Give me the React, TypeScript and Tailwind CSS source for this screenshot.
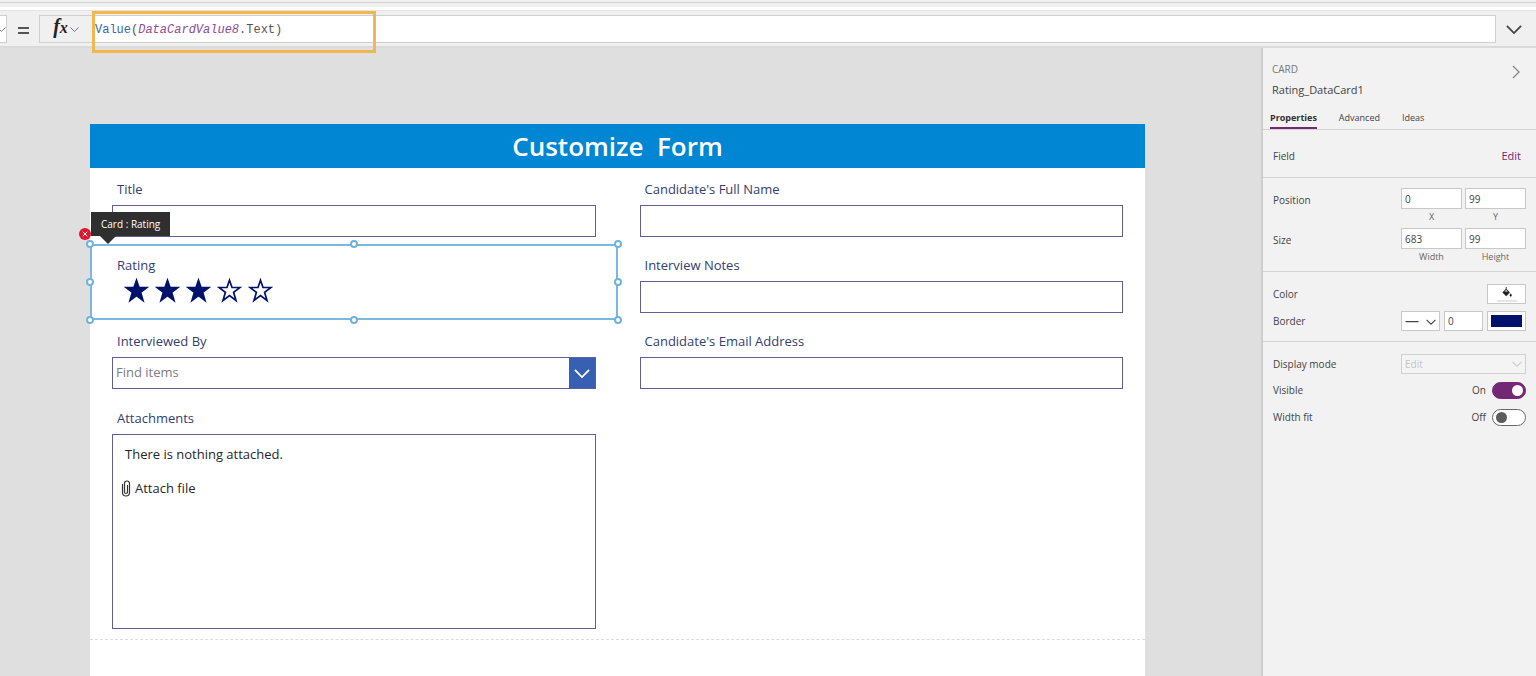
import { useState } from "react";
import { clsx } from "clsx";

const Chevron = ({ className }: { className?: string }) => (
  <svg viewBox="0 0 18 10" fill="none" stroke="currentColor" strokeWidth="2" className={className} aria-hidden="true">
    <path d="M1 1l8 8 8-8" />
  </svg>
);

const Star = ({ filled }: { filled: boolean }) => (
  <svg viewBox="0 0 25 25" className="block h-[25px] w-[25px]" fill={filled ? "#00126b" : "none"} stroke="#00126b" strokeWidth="1.7" aria-hidden="true">
    <path d="M12.5 2.2L15 9.5h8L16.6 14.3l2.4 8.1-6.500-4.900L6 22.400l2.400-8.100L2 9.500h8z" />
  </svg>
);

const TextField = ({ id, label }: { id: string; label: string }) => (
  <div className="h-[76px] px-[22px] pt-[9px]">
    <label htmlFor={id} className="mb-1 block pl-[5px] leading-6">{label}</label>
    <input id={id} type="text" className="block h-8 w-full border border-[#5d5f95] bg-white px-1 outline-none" />
  </div>
);

const NumberBox = ({ id, label, value }: { id: string; label: string; value: string }) => (
  <div className="w-[61px]">
    <input id={id} type="text" defaultValue={value} className="block h-[21px] w-full border border-[#c8c8c8] bg-white px-[3px] outline-none" />
    <label htmlFor={id} className="block text-center text-[9px] leading-4 text-[#666]">{label}</label>
  </div>
);

const Toggle = ({ id, label, on, onChange }: { id: string; label: string; on: boolean; onChange: (v: boolean) => void }) => (
  <div className="flex h-[17px] items-center justify-between">
    <label htmlFor={id}>{label}</label>
    <div className="flex items-center gap-[6px]">
      <span>{on ? "On" : "Off"}</span>
      <span className="relative block h-[17px] w-[34px]">
        <input
          id={id}
          type="checkbox"
          role="switch"
          checked={on}
          onChange={(e) => onChange(e.target.checked)}
          className="block h-full w-full appearance-none rounded-full border border-[#666] bg-white checked:border-[#742774] checked:bg-[#742774]"
        />
        <span className={clsx("pointer-events-none absolute top-[3px] h-[11px] w-[11px] rounded-full", on ? "right-[3px] bg-white" : "left-[4px] bg-[#5c5c5c]")} />
      </span>
    </div>
  </div>
);

const handles = [
  "-left-1 -top-1",
  "left-1/2 -ml-1 -top-1",
  "-right-1 -top-1",
  "-left-1 top-1/2 -mt-1",
  "-right-1 top-1/2 -mt-1",
  "-left-1 -bottom-1",
  "left-1/2 -ml-1 -bottom-1",
  "-right-1 -bottom-1",
];

const RatingCard = () => {
  const [rating, setRating] = useState(3);
  return (
    <fieldset className="relative h-[76px] px-[22px] pt-[9px]">
      <div className="pl-[5px] leading-6" id="rating-label">Rating</div>
      <div role="radiogroup" aria-labelledby="rating-label" className="mt-px flex gap-[6px] pl-3">
        {[1, 2, 3, 4, 5].map((n) => (
          <label key={n} className="relative block">
            <input type="radio" name="rating" aria-label={`${n}`} checked={rating === n} onChange={() => setRating(n)} className="absolute inset-0 appearance-none" />
            <Star filled={n <= rating} />
          </label>
        ))}
      </div>
      <div className="pointer-events-none absolute inset-0 border-2 border-[#7ab8df]" />
      {handles.map((place) => (
        <span key={place} className={clsx("absolute h-2 w-2 rounded-full border-2 border-[#6fb3dc] bg-white", place)} />
      ))}
      <div className="absolute -top-8 left-px h-6 bg-[#2f2f2f] px-[10px] text-[10px] leading-6 text-white">
        Card : Rating
        <svg viewBox="0 0 16 8" className="absolute left-[9px] top-6 h-2 w-4" fill="#2f2f2f" aria-hidden="true">
          <path d="M0 0h16L8 8z" />
        </svg>
      </div>
      <button type="button" aria-label="Show error" className="absolute -left-[11px] -top-4 flex h-3 w-3 items-center justify-center rounded-full bg-[#e0142a]">
        <svg viewBox="0 0 8 8" className="h-[6px] w-[6px]" stroke="#fff" strokeWidth="1.3" aria-hidden="true">
          <path d="M1 1l6 6M7 1L1 7" />
        </svg>
      </button>
    </fieldset>
  );
};

const FormulaBar = () => {
  const [formula, setFormula] = useState("Value(DataCardValue8.Text)");
  const parts = formula.split(/(Value(?=\()|DataCardValue8)/);
  return (
    <header className="bg-[#f0f0f0]">
      <div className="h-[3px] border-b border-[#d2d2d2]" />
      <div className="h-[7px] border-b-[3px] border-white" />
      <div className="flex h-[38px] border-b-2 border-[#dadada] border-t border-t-[#e4e4e4] pt-1">
        <button aria-label="Property" className="flex h-7 w-[7px] items-center justify-end overflow-hidden border border-l-0 border-[#cfcfcf] bg-white text-[#777]">
          <Chevron className="h-[5px] w-[9px] shrink-0" />
        </button>
        <span className="flex w-8 items-center justify-center" aria-hidden="true">
          <svg viewBox="0 0 11 9" className="h-[9px] w-[11px]" fill="#555"><path d="M0 1h11v2H0zM0 6h11v2H0z" /></svg>
        </span>
        <div className="relative flex h-7 min-w-0 flex-1 border border-[#cfcfcf]">
          <button className="flex w-[52px] items-center justify-center gap-[2px] text-[#222]" aria-label="Functions">
            <span className="pb-1 font-['Liberation_Serif'] text-xl leading-6 font-bold italic">f<span className="text-base">x</span></span>
            <Chevron className="h-[5px] w-[9px] text-[#777]" />
          </button>
          <div className="relative flex-1 bg-white font-['Liberation_Mono'] text-xs leading-7">
            <input
              aria-label="Formula"
              spellCheck={false}
              value={formula}
              onChange={(e) => setFormula(e.target.value)}
              className="block h-[26px] w-full px-[3px] text-transparent caret-[#444] outline-none"
            />
            <div aria-hidden="true" className="pointer-events-none absolute inset-0 whitespace-pre px-[3px] text-[#555]">
              {parts.map((p, i) => (
                <span key={i} className={clsx(p === "Value" && "text-[#3568a8]", p === "DataCardValue8" && "text-[#8c4a94] italic")}>{p}</span>
              ))}
            </div>
          </div>
          <div className="pointer-events-none absolute -top-[5px] left-[52px] h-[42px] w-[284px] border-[3px] border-[#f2b84f]" />
        </div>
        <button aria-label="Expand formula bar" className="flex h-7 w-10 items-center justify-center pr-1 text-[#444]">
          <Chevron className="h-[9px] w-4" />
        </button>
      </div>
    </header>
  );
};

const PropertiesPanel = () => {
  const [visible, setVisible] = useState(true);
  const [widthFit, setWidthFit] = useState(false);
  const [tab, setTab] = useState("Properties");
  return (
    <aside className="w-[275px] shrink-0 border-l-2 border-[#cdcdcd] bg-[#f2f2f2] text-[10px] text-[#444]">
      <div className="relative pt-3">
        <div className="px-[9px] leading-[18px] text-[#777]">CARD</div>
        <div className="px-[9px] text-[11px] leading-6">Rating_DataCard1</div>
        <button aria-label="Collapse panel" className="absolute right-3 top-4 flex h-4 w-4 items-center justify-center text-[#888]">
          <svg viewBox="0 0 8 14" className="h-[14px] w-2" fill="none" stroke="currentColor" strokeWidth="1.3" aria-hidden="true"><path d="M1 1l6 6-6 6" /></svg>
        </button>
        <div role="tablist" className="mt-2 flex gap-[22px] border-b border-[#d4d4d4] px-[7px] text-[9px] leading-4">
          {["Properties", "Advanced", "Ideas"].map((t) => (
            <button
              key={t}
              role="tab"
              aria-selected={tab === t}
              onClick={() => setTab(t)}
              className={clsx("border-b-2 pb-px", tab === t ? "border-[#742774] font-bold text-[#333]" : "border-transparent")}
            >
              {t}
            </button>
          ))}
        </div>
      </div>

      <section className="flex h-12 items-center justify-between border-b border-[#d4d4d4] pt-[6px] pr-[15px] pl-[10px]">
        <span>Field</span>
        <a href="#fields" className="text-[11px] text-[#742774]">Edit</a>
      </section>

      <section className="space-y-[3px] border-b border-[#d4d4d4] pt-[10px] pr-[10px] pb-[6px] pl-[10px]">
        <div className="flex">
          <span className="flex-1 leading-6">Position</span>
          <div className="flex gap-[3px]">
            <NumberBox id="pos-x" label="X" value="0" />
            <NumberBox id="pos-y" label="Y" value="99" />
          </div>
        </div>
        <div className="flex">
          <span className="flex-1 leading-6">Size</span>
          <div className="flex gap-[3px]">
            <NumberBox id="size-w" label="Width" value="683" />
            <NumberBox id="size-h" label="Height" value="99" />
          </div>
        </div>
      </section>

      <section className="space-y-[7px] border-b border-[#d4d4d4] pt-3 pr-[10px] pb-[10px] pl-[10px]">
        <div className="flex h-5 items-center justify-between">
          <span>Color</span>
          <button aria-label="Fill color" className="flex h-5 w-[39px] flex-col items-center justify-center gap-[3px] border border-[#c8c8c8] bg-white">
            <svg viewBox="0 0 12 12" className="h-[10px] w-[10px]" fill="#222" aria-hidden="true">
              <path d="M4.500 0h1v2.500L9.500 6.500 5 11 .5 6.500 4.500 2.500zM3 5.500h4L5 3.500zM10.500 7.500c.8 1.200 1.300 2 1.300 2.700a1.300 1.300 0 0 1-2.600 0c0-.7.5-1.500 1.300-2.700z" fillRule="evenodd" />
            </svg>
            <span className="h-[2px] w-5 bg-[#e6e6e6]" />
          </button>
        </div>
        <div className="flex h-5 items-center gap-[4px]">
          <span className="flex-1">Border</span>
          <div className="relative">
            <select aria-label="Border style" className="block h-5 w-[39px] appearance-none border border-[#c8c8c8] bg-white pl-[3px] text-sm leading-4 outline-none">
              <option>—</option>
            </select>
            <Chevron className="pointer-events-none absolute right-1 top-[8px] h-[6px] w-[10px]" />
          </div>
          <input aria-label="Border width" defaultValue="0" className="h-5 w-[39px] border border-[#c8c8c8] bg-white px-[3px] outline-none" />
          <button aria-label="Border color" className="h-5 w-[39px] border border-[#c8c8c8] bg-white p-[3px]">
            <span className="block h-full bg-[#00126b]" />
          </button>
        </div>
      </section>

      <section className="pt-3 pr-[10px] pl-[10px]">
        <div className="flex h-5 items-center justify-between">
          <label htmlFor="display-mode">Display mode</label>
          <div className="relative">
            <select id="display-mode" disabled className="block h-5 w-[125px] appearance-none border border-[#d0d0d0] bg-[#f4f4f4] px-[3px] text-[#c4c4c4] opacity-100 outline-none">
              <option>Edit</option>
            </select>
            <Chevron className="pointer-events-none absolute right-1 top-[7px] h-[6px] w-[10px] text-[#ccc]" />
          </div>
        </div>
        <div className="mt-2 space-y-[10px]">
          <Toggle id="visible" label="Visible" on={visible} onChange={setVisible} />
          <Toggle id="width-fit" label="Width fit" on={widthFit} onChange={setWidthFit} />
        </div>
      </section>
    </aside>
  );
};

const App = () => {
  return (
    <div className="flex min-h-screen flex-col bg-[#dfdfdf] font-['Open_Sans',sans-serif]">
      <FormulaBar />
      <div className="flex flex-1">
        <main className="flex min-w-0 flex-1 flex-col pt-[76px] pr-[116px] pl-[90px]">
          <h1 className="h-11 bg-[#0086d2] text-center text-[26px] leading-[44px] font-semibold whitespace-pre text-white">Customize  Form</h1>
          <div className="flex-1 bg-white">
            <form className="grid grid-cols-2 border-b border-dashed border-[#dcdcdc] text-[13px] text-[#33406f]" onSubmit={(e) => e.preventDefault()}>
              <div>
                <TextField id="title" label="Title" />
                <RatingCard />
                <div className="h-[76px] px-[22px] pt-[9px]">
                  <label htmlFor="interviewed-by" className="mb-1 block pl-[5px] leading-6">Interviewed By</label>
                  <div className="flex h-8 border border-[#5d5f95]">
                    <input id="interviewed-by" placeholder="Find items" className="min-w-0 flex-1 bg-white px-[3px] outline-none placeholder:text-[#7d7d7d]" />
                    <button type="button" aria-label="Open list" className="flex w-[26px] items-center justify-center bg-[#3860b2] text-white">
                      <Chevron className="h-[9px] w-4" />
                    </button>
                  </div>
                </div>
                <div className="px-[22px] pt-[10px] pb-[10px]">
                  <div className="mb-1 pl-[5px] leading-6">Attachments</div>
                  <div className="h-[195px] border border-[#5d5f95] bg-white pt-[7px] text-[#262626]">
                    <p className="pl-3 leading-6">There is nothing attached.</p>
                    <button type="button" className="mt-[10px] flex items-center gap-1 pl-2 leading-6">
                      <svg viewBox="0 0 10 17" className="h-[17px] w-[10px]" fill="none" stroke="#333" strokeWidth="1.2" aria-hidden="true">
                        <path d="M1.500 4v8.500a3.500 3.500 0 0 0 7 0V3.500a2.500 2.500 0 0 0-5 0V12a1.500 1.500 0 0 0 3 0V5" />
                      </svg>
                      Attach file
                    </button>
                  </div>
                </div>
              </div>
              <div>
                <TextField id="full-name" label="Candidate's Full Name" />
                <TextField id="notes" label="Interview Notes" />
                <TextField id="email" label="Candidate's Email Address" />
              </div>
            </form>
          </div>
        </main>
        <PropertiesPanel />
      </div>
    </div>
  );
};

export default App;
